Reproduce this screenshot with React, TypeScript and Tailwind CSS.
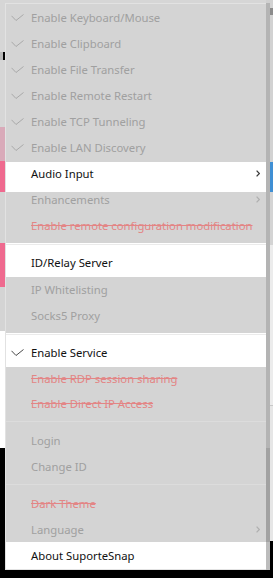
import clsx from "clsx";

type Tone = "off" | "on" | "strike";

interface Row {
  kind: "row";
  label: string;
  tone: Tone;
  check?: boolean;
  sub?: boolean;
  white?: boolean;
  box: string;
}

interface Sep {
  kind: "sep";
  white?: boolean;
}

const menu: (Row | Sep)[] = [
  { kind: "row", label: "Enable Keyboard/Mouse", tone: "off", check: true, box: "h-[26px]" },
  { kind: "row", label: "Enable Clipboard", tone: "off", check: true, box: "h-[26px]" },
  { kind: "row", label: "Enable File Transfer", tone: "off", check: true, box: "h-[26px]" },
  { kind: "row", label: "Enable Remote Restart", tone: "off", check: true, box: "h-[26px]" },
  { kind: "row", label: "Enable TCP Tunneling", tone: "off", check: true, box: "h-[26px]" },
  { kind: "row", label: "Enable LAN Discovery", tone: "off", check: true, box: "h-[28px] pb-[2px]" },
  { kind: "row", label: "Audio Input", tone: "on", sub: true, white: true, box: "h-[30px] pb-[7px]" },
  { kind: "row", label: "Enhancements", tone: "off", sub: true, box: "h-[20px] pb-[5px]" },
  { kind: "row", label: "Enable remote configuration modification", tone: "strike", box: "h-[26px]" },
  { kind: "sep", white: true },
  { kind: "row", label: "ID/Relay Server", tone: "on", white: true, box: "h-[28px] pb-[2px]" },
  { kind: "row", label: "IP Whitelisting", tone: "off", box: "h-[25px] pb-[1px]" },
  { kind: "row", label: "Socks5 Proxy", tone: "off", box: "h-[26px]" },
  { kind: "sep", white: true },
  { kind: "row", label: "Enable Service", tone: "on", check: true, white: true, box: "h-[28px] pb-[2px]" },
  { kind: "row", label: "Enable RDP session sharing", tone: "strike", box: "h-[23px]" },
  { kind: "row", label: "Enable Direct IP Access", tone: "strike", box: "h-[26px]" },
  { kind: "sep" },
  { kind: "row", label: "Login", tone: "off", box: "h-[26px]" },
  { kind: "row", label: "Change ID", tone: "off", box: "h-[26px]" },
  { kind: "sep" },
  { kind: "row", label: "Dark Theme", tone: "strike", box: "h-[26px]" },
  { kind: "row", label: "Language", tone: "off", sub: true, box: "h-[26px]" },
  { kind: "row", label: "About SuporteSnap", tone: "on", white: true, box: "h-[27px]" },
];

function Check({ on }: { on: boolean }) {
  return (
    <svg width="13" height="8" viewBox="0 0 13 8" fill="none">
      <polyline
        points="0.5,1.8 5,6.5 12.5,0.5"
        stroke={on ? "#4a4a4a" : "#a9a9a9"}
        strokeWidth="1"
      />
    </svg>
  );
}

function Chevron({ on }: { on: boolean }) {
  return (
    <svg width="4" height="7" viewBox="0 0 4 7" fill="none" className="ml-auto shrink-0">
      <polyline
        points="0.6,0.6 3.4,3.5 0.6,6.4"
        stroke={on ? "#3a3a3a" : "#b0b0b0"}
        strokeWidth="1.3"
      />
    </svg>
  );
}

function MenuRow({ row }: { row: Row }) {
  return (
    <div
      className={clsx(
        "flex items-center pr-[6px]",
        row.box,
        row.white ? "bg-white" : "bg-[#d4d4d4]"
      )}
    >
      <span className="w-[25px] shrink-0 flex pl-[5px] pt-[1px]">
        {row.check && <Check on={row.tone === "on"} />}
      </span>
      <span
        className={clsx(
          "whitespace-nowrap leading-none pt-[1px]",
          row.tone === "on" && "text-[#111111]",
          row.tone === "off" && "text-[#a0a0a0]",
          row.tone === "strike" && "text-[#e38585] line-through decoration-[#e38585]"
        )}
      >
        {row.label}
      </span>
      {row.sub && <Chevron on={row.tone === "on"} />}
    </div>
  );
}

function MenuSep({ white }: { white?: boolean }) {
  if (white) {
    return (
      <div className="flex flex-col">
        <div className="h-[5px] bg-[#d4d4d4]" />
        <div className="h-px bg-white" />
        <div className="h-px bg-[#ebebeb]" />
        <div className="h-[4px] bg-white" />
      </div>
    );
  }
  return (
    <div className="flex flex-col bg-[#d4d4d4]">
      <div className="h-[5px]" />
      <div className="h-px bg-[#dcdcdc]" />
      <div className="h-[5px]" />
    </div>
  );
}

export default function App() {
  return (
    <div
      className="w-[273px] h-[578px] bg-black flex flex-col overflow-hidden text-[11.3px]"
      style={{ fontFamily: '"Noto Sans", "Open Sans", sans-serif' }}
    >
      <div className="flex h-[570px]">
        {/* window behind, left edge */}
        <div className="w-[5px] flex flex-col shrink-0">
          <div className="h-[52px] bg-[#d6d6d6]" />
          <div className="h-[8px] bg-[#b8b8b8] w-[3px]" />
          <div className="h-[67px] bg-[#d6d6d6]" />
          <div className="h-[34px] bg-[#d9aab9]" />
          <div className="h-[31px] bg-[#ef6a8f]" />
          <div className="h-[51px] bg-[#d4d4d4]" />
          <div className="h-[44px] bg-[#ef6a8f]" />
          <div className="h-[44px] bg-[#d4d4d4]" />
          <div className="h-[117px] bg-white" />
          <div className="flex-1 bg-black" />
        </div>

        {/* popup menu */}
        <div className="w-[261px] shrink-0 flex flex-col">
          <div className="h-[3px] bg-[#d6d6d6]" />
          <div className="flex flex-col border-l border-t border-b border-[#e2e2e2] bg-[#d4d4d4]">
            {menu.map((item, i) =>
              item.kind === "sep" ? (
                <MenuSep key={i} white={item.white} />
              ) : (
                <MenuRow key={i} row={item} />
              )
            )}
          </div>
        </div>

        {/* shadow + window behind, right edge */}
        <div className="w-[4px] shrink-0 flex flex-col">
          <div className="h-[3px] bg-[#d0d0d0]" />
          <div className="h-[445px] bg-[#b4b4b4]" />
          <div className="h-[94px] bg-[#a2a2a2]" />
          <div className="flex-1 bg-[#bcbcbc]" />
        </div>
        <div className="w-[3px] shrink-0 flex flex-col">
          <div className="h-[8px] bg-[#d2d2d2]" />
          <div className="h-[7px] bg-[#8c8c8c]" />
          <div className="h-[147px] bg-[#d2d2d2]" />
          <div className="h-[30px] bg-[#3f8fd4]" />
          <div className="h-[53px] bg-[#d4d4d4]" />
          <div className="h-[160px] bg-[#ececec]" />
          <div className="h-px bg-[#c8c8c8]" />
          <div className="h-[135px] bg-[#e6e6e6]" />
          <div className="flex-1 bg-black" />
        </div>
      </div>
    </div>
  );
}
